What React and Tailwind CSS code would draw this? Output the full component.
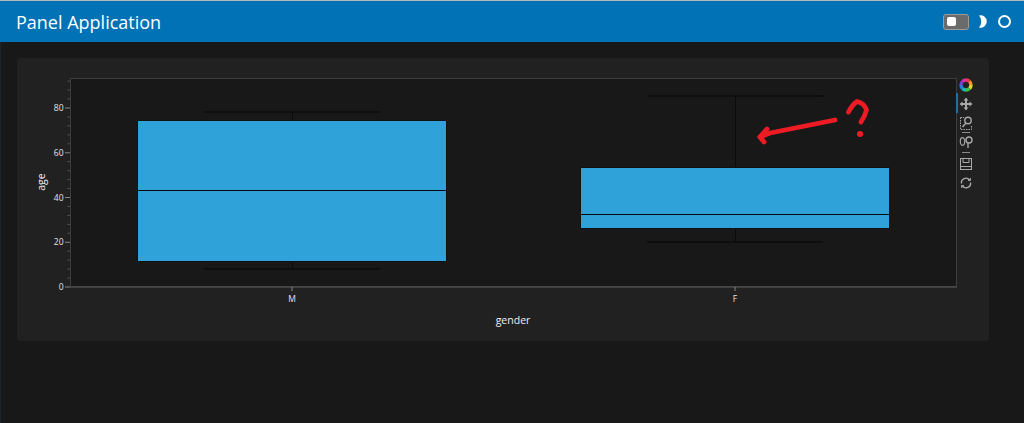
import React from 'react';

const yTicks = [0, 20, 40, 60, 80];
const minorTicks = [];
for (let v = 0; v <= 92; v += 4) {
    if (v % 20 !== 0) minorTicks.push(v);
}
const yPos = (v) => 287 - v * 2.2375;

const labelFont = "'Open Sans', sans-serif";

const Box = ({ x, top, bottom, median, whiskerTop, whiskerBottom }) => {
    const mid = x + 155;
    return (
        <g>
            <line x1={mid + 0.5} x2={mid + 0.5} y1={whiskerTop} y2={top} stroke="#0b0b0b" />
            <line x1={mid + 0.5} x2={mid + 0.5} y1={bottom} y2={whiskerBottom} stroke="#0b0b0b" />
            <line x1={mid - 88} x2={mid + 88} y1={whiskerTop} y2={whiskerTop} stroke="#0b0b0b" strokeWidth="1.5" />
            <line x1={mid - 88} x2={mid + 88} y1={whiskerBottom} y2={whiskerBottom} stroke="#0b0b0b" strokeWidth="1.5" />
            <rect x={x + 0.5} y={top + 0.5} width="309" height={bottom - top} fill="#30a2da" stroke="#111" strokeWidth="1" />
            <line x1={x} x2={x + 310} y1={median + 0.5} y2={median + 0.5} stroke="#080808" strokeWidth="1" />
        </g>
    );
};

const BoxPlot = () => (
    <svg width="941" height="283" viewBox="17 58 941 283" className="shrink-0 block">
        <rect x="70.5" y="78.5" width="886" height="208" fill="#181818" stroke="#3d3d3d" />
        <Box x={137} top={120} bottom={261} median={190} whiskerTop={112} whiskerBottom={269} />
        <Box x={580} top={167} bottom={228} median={214} whiskerTop={96} whiskerBottom={242} />
        <line x1="70" x2="957" y1="287" y2="287" stroke="#4a4a4a" strokeWidth="1.5" />
        {minorTicks.map((v) => (
            <line key={v} x1="67.5" x2="70" y1={yPos(v)} y2={yPos(v)} stroke="#555" />
        ))}
        {yTicks.map((v) => (
            <g key={v}>
                <line x1="65" x2="70" y1={yPos(v)} y2={yPos(v)} stroke="#888" />
                <text x="63.5" y={yPos(v) + 3} textAnchor="end" fontSize="8.5" fontWeight="500" fill="#e4e4e4" fontFamily={labelFont}>{v}</text>
            </g>
        ))}
        <line x1="292" x2="292" y1="287" y2="291" stroke="#888" />
        <line x1="735" x2="735" y1="287" y2="291" stroke="#888" />
        <text x="292" y="302" textAnchor="middle" fontSize="8.5" fontWeight="500" fill="#e4e4e4" fontFamily={labelFont}>M</text>
        <text x="735" y="302" textAnchor="middle" fontSize="8.5" fontWeight="500" fill="#e4e4e4" fontFamily={labelFont}>F</text>
        <text x="513" y="324" textAnchor="middle" fontSize="10.5" fontWeight="500" fill="#f0f0f0" fontFamily={labelFont}>gender</text>
        <text transform="translate(45 182) rotate(-90)" textAnchor="middle" fontSize="10.5" fontWeight="500" fill="#f0f0f0" fontFamily={labelFont}>age</text>
        {/* hand drawn arrow and question mark */}
        <g fill="none" stroke="#ed1c24" strokeLinecap="round" strokeLinejoin="round" strokeWidth="4.8">
            <path d="M835 120 L770 133 L760 137" />
            <path d="M767 129 L760 137 L764 142" />
            <path d="M848.5 112 Q852 105 857 101.5 Q864 103 866.5 110 Q865 116 861 122" />
        </g>
        <circle cx="860" cy="134" r="3" fill="#ed1c24" />
    </svg>
);

const Toolbar = () => (
    <div className="flex flex-col items-center w-4 pt-[19px]">
        <svg width="16" height="16" viewBox="0 0 16 16" fill="none" strokeWidth="3.4">
            <path d="M8 3 A5 5 0 0 1 11.5 4.5" stroke="#ef3b3b" />
            <path d="M11.5 4.5 A5 5 0 0 1 13 8" stroke="#f59a23" />
            <path d="M13 8 A5 5 0 0 1 11.5 11.5" stroke="#e8d820" />
            <path d="M11.5 11.5 A5 5 0 0 1 8 13" stroke="#3fc04a" />
            <path d="M8 13 A5 5 0 0 1 4.5 11.5" stroke="#22b8a8" />
            <path d="M4.5 11.5 A5 5 0 0 1 3 8" stroke="#2b7fe0" />
            <path d="M3 8 A5 5 0 0 1 4.5 4.5" stroke="#7a3fd0" />
            <path d="M4.5 4.5 A5 5 0 0 1 8 3" stroke="#d530a8" />
        </svg>
        <svg width="16" height="16" viewBox="0 0 16 16" fill="#a8a8a8" className="mt-[3px]">
            <path d="M8 1.5 L10.5 4.5 H9 V7 H11.5 V5.5 L14.5 8 L11.5 10.5 V9 H9 V11.5 H10.5 L8 14.5 L5.5 11.5 H7 V9 H4.5 V10.5 L1.5 8 L4.5 5.5 V7 H7 V4.5 H5.5Z" />
        </svg>
        <svg width="16" height="16" viewBox="0 0 16 16" fill="none" stroke="#a8a8a8" className="mt-[3px]">
            <path d="M2.5 2.5 H6 M2.5 2.5 V14.5 H13.5 V11" strokeDasharray="1.5 1" />
            <circle cx="10" cy="5.5" r="3.2" strokeWidth="1.4" />
            <path d="M8 8 L4.5 12" strokeWidth="1.5" />
        </svg>
        <div className="w-[8px] h-[1px] mt-[1px] bg-[#8c8c8c]" />
        <svg width="16" height="16" viewBox="0 0 16 16" fill="none" stroke="#a8a8a8" className="mt-[1px]">
            <ellipse cx="4.5" cy="7.5" rx="2.2" ry="3.8" strokeWidth="1.2" />
            <circle cx="11" cy="6" r="3" strokeWidth="1.4" />
            <path d="M10 9 V14" strokeWidth="1.4" />
        </svg>
        <div className="w-[8px] h-[1px] mt-[2px] bg-[#8c8c8c]" />
        <svg width="16" height="16" viewBox="0 0 16 16" fill="none" stroke="#a8a8a8" className="mt-[3px]">
            <rect x="2.5" y="2.5" width="11" height="11" />
            <path d="M5 2.5 V6.5 H11 V2.5" />
            <path d="M2.5 10.5 H13.5" />
        </svg>
        <svg width="16" height="16" viewBox="0 0 16 16" fill="none" stroke="#a8a8a8" strokeWidth="1.4" className="mt-[3px]">
            <path d="M3.5 8.5 A4.5 4.5 0 0 1 11.5 5" />
            <path d="M12.5 7.5 A4.5 4.5 0 0 1 4.5 11" />
            <path d="M10 5.5 H12.5 V3" fill="#a8a8a8" strokeWidth="0.8" />
            <path d="M6 10.5 H3.5 V13" fill="#a8a8a8" strokeWidth="0.8" />
        </svg>
    </div>
);

const App = () => {
    return (
        <div className="w-[1024px] h-[423px] overflow-hidden bg-[#181818] flex flex-col font-['Open_Sans',sans-serif]">
            <header className="h-[42px] shrink-0 border-t border-t-[#b5b5b5] bg-[#0072b5] flex items-center justify-between pl-4 pr-[13px]">
                <h1 className="text-[18px] leading-none text-white">Panel Application</h1>
                <div className="flex items-center">
                    <div className="w-[26px] h-4 rounded-[3px] border border-[#9a9a9a] bg-[#6b6b6b] flex items-center pl-[3px]">
                        <div className="w-[9px] h-[9px] rounded-[2px] bg-white" />
                    </div>
                    <svg width="10" height="13" viewBox="0 0 10 13" className="ml-[9px]">
                        <path d="M1 .5 A6.2 6.2 0 1 1 1 12.5 A9 9 0 0 0 1 .5Z" fill="white" />
                    </svg>
                    <div className="w-[13px] h-[13px] ml-[10px] rounded-full border-2 border-white" />
                </div>
            </header>
            <main className="pl-4 pt-4 flex-1 border-l border-l-[#1b232b]">
                <div className="w-[972px] h-[283px] rounded-[3px] bg-[#212121] flex relative">
                    <BoxPlot />
                    <div className="absolute left-[939px] top-[35px] w-[2px] h-5 bg-[#1f6fa8]" />
                    <Toolbar />
                </div>
            </main>
        </div>
    );
};

export default App;
